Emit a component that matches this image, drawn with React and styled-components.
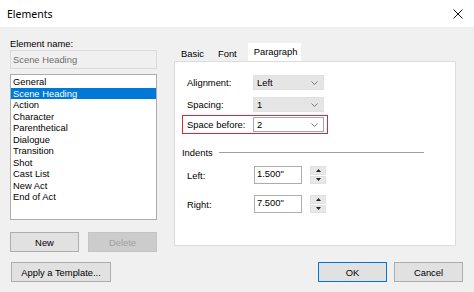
import styled, { createGlobalStyle } from "styled-components";

const GlobalStyle = createGlobalStyle`
  html, body {
    margin: 0;
    padding: 0;
    background: #f0f0f0;
  }
  * {
    box-sizing: border-box;
  }
`;

const Window = styled.div`
  width: 474px;
  height: 292px;
  background: #f0f0f0;
  font-family: "Liberation Sans", Arial, sans-serif;
  font-size: 9.4px;
  color: #000;
  display: flex;
  flex-direction: column;
  overflow: hidden;
`;

const TitleBar = styled.div`
  height: 27px;
  background: #fff;
  display: flex;
  align-items: center;
  justify-content: space-between;
  padding: 0 11px 0 7px;
`;

const Title = styled.span`
  font-family: "Noto Sans", sans-serif;
  font-size: 10.5px;
  color: #000;
`;

const Content = styled.div`
  display: flex;
  padding: 11px 0 0 10px;
`;

const LeftColumn = styled.div`
  width: 147px;
  display: flex;
  flex-direction: column;
`;

const RightColumn = styled.div`
  width: 282px;
  margin-left: 17px;
  margin-top: 5px;
  display: flex;
  flex-direction: column;
`;

const Label = styled.div`
  line-height: 11px;
  height: 11px;
`;

const NameBox = styled.div`
  margin-top: 1px;
  height: 19px;
  border: 1px solid #dadada;
  background: #f0f0f0;
  color: #6d6d6d;
  padding-left: 2px;
  display: flex;
  align-items: center;
`;

const ListBox = styled.ul`
  margin: 5px 0 0;
  padding: 1px 0 0;
  list-style: none;
  height: 146px;
  background: #fff;
  border: 1px solid #acacac;
`;

const ListItem = styled.li`
  height: 11.5px;
  line-height: 11.5px;
  padding-left: 2px;
  background: ${(p) => (p.$selected ? "#0078d7" : "transparent")};
  color: ${(p) => (p.$selected ? "#fff" : "#000")};
`;

const ButtonRow = styled.div`
  margin-top: 12px;
  display: flex;
  justify-content: space-between;
`;

const Button = styled.button`
  width: ${(p) => p.$width || 69}px;
  height: 20px;
  margin: 0;
  padding: 0;
  font-family: inherit;
  font-size: inherit;
  color: ${(p) => (p.disabled ? "#a0a0a0" : "#000")};
  background: ${(p) => (p.disabled ? "#cccccc" : "#e1e1e1")};
  border: 1px solid
    ${(p) => (p.$default ? "#0078d7" : p.disabled ? "#c4c4c4" : "#adadad")};
`;

const TabBar = styled.div`
  height: 18px;
  display: flex;
  align-items: flex-end;
`;

const Tab = styled.div`
  height: ${(p) => (p.$active ? 18 : 15)}px;
  line-height: ${(p) => (p.$active ? 17 : 15)}px;
  padding: ${(p) => (p.$active ? "0 4px 0 6px" : "0 7px")};
  margin-left: ${(p) => (p.$active ? 4 : 0)}px;
  background: ${(p) => (p.$active ? "#fff" : "transparent")};
  position: relative;
  z-index: 1;
`;

const Panel = styled.div`
  height: 185px;
  background: #fff;
  border: 1px solid #dcdcdc;
  display: flex;
  flex-direction: column;
  padding: 13px 0 0 12px;
`;

const FieldRow = styled.div`
  display: flex;
  align-items: center;
  height: ${(p) => p.$height || 15}px;
  margin-top: ${(p) => p.$gap || 0}px;
`;

const FieldLabel = styled.span`
  width: 66px;
`;

const Highlight = styled.div`
  margin: 3px 0 0 -5px;
  width: 146px;
  border: 1px solid #d9283d;
  padding: 1px 0 1px 4px;
  display: flex;
  align-items: center;
`;

const Select = styled.div`
  width: 71px;
  height: 15px;
  display: flex;
  align-items: center;
  justify-content: space-between;
  padding: 0 5px 0 3px;
  background: ${(p) => (p.$open ? "#fff" : "#e5e5e5")};
  border: 1px solid ${(p) => (p.$open ? "#a7a7a7" : "#e0e0e0")};
`;

const Section = styled.div`
  margin: 13px 0 0 -5px;
  display: flex;
  align-items: center;
  height: 11px;
`;

const Rule = styled.div`
  margin-left: 6px;
  width: 205px;
  height: 1px;
  background: #a0a0a0;
`;

const NumberBox = styled.div`
  margin-left: 1px;
  width: 48px;
  height: 18px;
  border: 1px solid #acacac;
  padding: 1px 0 0 2px;
  background: #fff;
`;

const Spinner = styled.div`
  margin-left: 8px;
  width: 16px;
  height: 18px;
  display: flex;
  flex-direction: column;
  justify-content: space-between;
`;

const SpinButton = styled.div`
  height: 8.5px;
  background: #e8e8e8;
  border: 1px solid #e0e0e0;
  display: flex;
  align-items: center;
  justify-content: center;
`;

const Footer = styled.div`
  margin-top: 10px;
  display: flex;
  align-items: center;
  padding: 0 11px 0 11px;
`;

const FooterRight = styled.div`
  margin-left: auto;
  display: flex;
  gap: 7px;
`;

const Chevron = () => (
  <svg width="7" height="4" viewBox="0 0 7 4">
    <polyline points="0.5,0.5 3.5,3.5 6.5,0.5" fill="none" stroke="#777" strokeWidth="1" />
  </svg>
);

const Arrow = ({ up }) => (
  <svg width="5" height="3" viewBox="0 0 5 3">
    <polygon points={up ? "0,3 5,3 2.5,0" : "0,0 5,0 2.5,3"} fill="#222" />
  </svg>
);

const CloseIcon = () => (
  <svg width="10" height="10" viewBox="0 0 10 10">
    <path d="M0.5 0.5 L9.5 9.5 M9.5 0.5 L0.5 9.5" stroke="#111" strokeWidth="1" />
  </svg>
);

const elements = [
  "General",
  "Scene Heading",
  "Action",
  "Character",
  "Parenthetical",
  "Dialogue",
  "Transition",
  "Shot",
  "Cast List",
  "New Act",
  "End of Act",
];

export default function App() {
  return (
    <Window>
      <GlobalStyle />
      <TitleBar>
        <Title>Elements</Title>
        <CloseIcon />
      </TitleBar>
      <Content>
        <LeftColumn>
          <Label>Element name:</Label>
          <NameBox>Scene Heading</NameBox>
          <ListBox>
            {elements.map((name) => (
              <ListItem key={name} $selected={name === "Scene Heading"}>
                {name}
              </ListItem>
            ))}
          </ListBox>
          <ButtonRow>
            <Button>New</Button>
            <Button disabled>Delete</Button>
          </ButtonRow>
        </LeftColumn>
        <RightColumn>
          <TabBar>
            <Tab>Basic</Tab>
            <Tab>Font</Tab>
            <Tab $active>Paragraph</Tab>
          </TabBar>
          <Panel>
            <FieldRow>
              <FieldLabel>Alignment:</FieldLabel>
              <Select>
                Left
                <Chevron />
              </Select>
            </FieldRow>
            <FieldRow $gap={7}>
              <FieldLabel>Spacing:</FieldLabel>
              <Select>
                1
                <Chevron />
              </Select>
            </FieldRow>
            <Highlight>
              <FieldLabel>Space before:</FieldLabel>
              <Select $open>
                2
                <Chevron />
              </Select>
            </Highlight>
            <Section>
              Indents
              <Rule />
            </Section>
            <FieldRow $height={18} $gap={8}>
              <FieldLabel>Left:</FieldLabel>
              <NumberBox>1.500"</NumberBox>
              <Spinner>
                <SpinButton>
                  <Arrow up />
                </SpinButton>
                <SpinButton>
                  <Arrow />
                </SpinButton>
              </Spinner>
            </FieldRow>
            <FieldRow $height={18} $gap={11}>
              <FieldLabel>Right:</FieldLabel>
              <NumberBox>7.500"</NumberBox>
              <Spinner>
                <SpinButton>
                  <Arrow up />
                </SpinButton>
                <SpinButton>
                  <Arrow />
                </SpinButton>
              </Spinner>
            </FieldRow>
          </Panel>
        </RightColumn>
      </Content>
      <Footer>
        <Button $width={100}>Apply a Template...</Button>
        <FooterRight>
          <Button $default>OK</Button>
          <Button>Cancel</Button>
        </FooterRight>
      </Footer>
    </Window>
  );
}
